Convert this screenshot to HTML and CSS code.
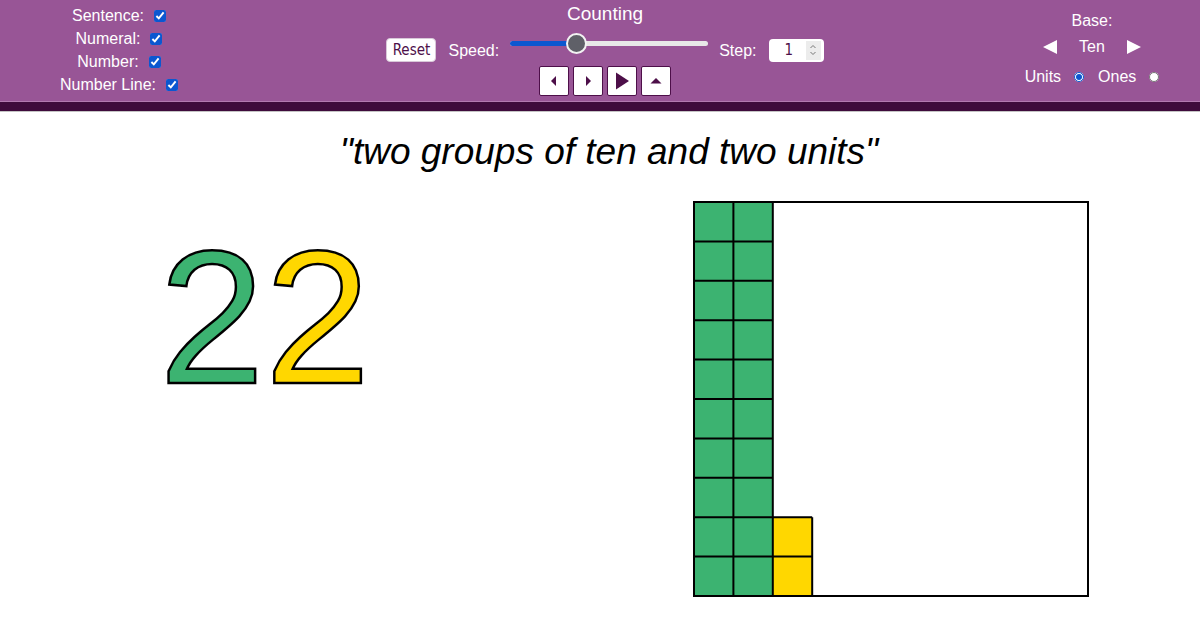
FILE: index.html
```html
<!DOCTYPE html>
<html lang="en">
<head>
<meta charset="utf-8">
<title>Counting</title>
<link rel="stylesheet" href="styles.css">
</head>
<body>
<header class="toolbar">
  <div class="opts">
    <label class="opt">Sentence: <input type="checkbox" checked></label>
    <label class="opt">Numeral: <input type="checkbox" checked></label>
    <label class="opt">Number: <input type="checkbox" checked></label>
    <label class="opt">Number Line: <input type="checkbox" checked></label>
  </div>
  <div class="center">
    <div class="title">Counting</div>
    <div class="controls">
      <button class="reset">Reset</button>
      <span class="lbl">Speed:</span>
      <div class="slider">
        <div class="fill" style="width:66px"></div>
        <div class="thumb" style="left:56px"></div>
      </div>
      <span class="lbl">Step:</span>
      <div class="stepbox">
        <span class="val">1</span>
        <span class="spin">
          <svg width="10" height="16" viewBox="0 0 10 16"><path d="M2.5 6 5 3.5 7.5 6M2.5 10 5 12.5 7.5 10" fill="none" stroke="#777" stroke-width="1"/></svg>
        </span>
      </div>
    </div>
    <div class="playbtns">
      <button class="pb"><svg width="10" height="12" viewBox="0 0 10 12"><path d="M7 1 2 6 7 11Z" fill="#4d0f49"/></svg></button>
      <button class="pb"><svg width="10" height="12" viewBox="0 0 10 12"><path d="M3 1 8 6 3 11Z" fill="#4d0f49"/></svg></button>
      <button class="pb"><svg width="16" height="18" viewBox="0 0 16 18"><path d="M2 0.5 15 9 2 17.5Z" fill="#4d0f49"/></svg></button>
      <button class="pb"><svg width="14" height="10" viewBox="0 0 14 10"><path d="M1.5 7.5 7 2 12.5 7.5Z" fill="#4d0f49"/></svg></button>
    </div>
  </div>
  <div class="base">
    <div class="base-title">Base:</div>
    <div class="base-row">
      <svg width="16" height="16" viewBox="0 0 16 16"><path d="M15 1V15L1 8Z" fill="#fff"/></svg>
      <span>Ten</span>
      <svg width="16" height="16" viewBox="0 0 16 16"><path d="M1 1V15L15 8Z" fill="#fff"/></svg>
    </div>
    <div class="radio-row">
      <label class="radio">Units <input type="radio" name="unit" checked></label>
      <label class="radio">Ones <input type="radio" name="unit"></label>
    </div>
  </div>
</header>
<div class="band"></div>
<main>
  <p class="sentence">"two groups of ten and two units"</p>
  <div class="stage">
    <div class="numeral"><span class="tens">2</span><span class="ones">2</span></div>
    <svg class="blocks" width="398" height="398" viewBox="0 0 398 398">
      <rect x="2" y="2" width="394" height="394" fill="#fff"/>
      <rect x="2" y="2" width="78.8" height="394" fill="#3cb371"/>
      <rect x="80.8" y="317.2" width="39.4" height="78.8" fill="#ffd700"/>
      <path d="M2 41.4H80.8M2 80.8H80.8M2 120.2H80.8M2 159.6H80.8M2 199H80.8M2 238.4H80.8M2 277.8H80.8M2 317.2H120.2M2 356.6H120.2M41.4 2V396M80.8 2V396M120.2 317.2V396" fill="none" stroke="#000" stroke-width="2"/>
      <rect x="2" y="2" width="394" height="394" fill="none" stroke="#000" stroke-width="2"/>
    </svg>
  </div>
</main>
</body>
</html>
```

FILE: styles.css
```css
html, body {
  margin: 0;
  padding: 0;
  background: #fff;
  font-family: "Liberation Sans", Arial, sans-serif;
}

.toolbar {
  display: grid;
  grid-template-columns: 238px 734px 1fr;
  height: 101px;
  background: #985596;
  border-bottom: 1px solid #b27ab0;
  color: #fff;
  font-size: 16px;
}

.opts {
  display: flex;
  flex-direction: column;
  align-items: center;
  padding-top: 4px;
}

.opt {
  display: flex;
  align-items: center;
  gap: 10px;
  height: 23px;
  line-height: 23px;
}

.opt input {
  margin: 0;
  width: 12px;
  height: 12px;
  accent-color: #0b57d0;
}

.center {
  display: flex;
  flex-direction: column;
  align-items: center;
}

.title {
  font-size: 19px;
  line-height: 22px;
  padding-top: 3px;
}

.controls {
  display: flex;
  align-items: center;
  gap: 12px;
  height: 24px;
  margin-top: 13px;
}

.reset {
  width: 50px;
  height: 24px;
  padding: 0;
  border: 1px solid #d8c8d8;
  border-radius: 4px;
  background: #fff;
  color: #4d0f49;
  font-family: "DejaVu Sans Condensed", "DejaVu Sans", sans-serif;
  font-size: 15px;
}

.lbl {
  font-size: 16px;
  line-height: 24px;
  position: relative;
  top: 1px;
}

.slider {
  position: relative;
  width: 198px;
  height: 5px;
  border-radius: 3px;
  background: #e8e8e8;
  margin: 0 -1px;
  top: -7px;
}

.fill {
  height: 5px;
  border-radius: 3px 0 0 3px;
  background: #0b57d0;
}

.thumb {
  position: absolute;
  top: -8px;
  width: 17px;
  height: 17px;
  border-radius: 50%;
  background: #5f6068;
  border: 2px solid #f2f2f2;
}

.stepbox {
  display: flex;
  align-items: center;
  justify-content: space-between;
  width: 55px;
  height: 23px;
  box-sizing: border-box;
  padding: 0 3px 0 16px;
  background: #fff;
  border-radius: 4px;
  color: #4d0f49;
  font-family: "DejaVu Sans Condensed", "DejaVu Sans", sans-serif;
  font-size: 15px;
}

.spin {
  display: flex;
  align-items: center;
  justify-content: center;
  width: 15px;
  height: 19px;
  background: #ececec;
}

.spin svg {
  display: block;
}

.playbtns {
  display: flex;
  gap: 4px;
  margin-top: 4px;
}

.pb {
  display: flex;
  align-items: center;
  justify-content: center;
  width: 30px;
  height: 30px;
  padding: 0;
  background: #fff;
  border: 1px solid #4d0f49;
  border-radius: 2px;
}

.pb svg {
  display: block;
}

.base {
  display: flex;
  flex-direction: column;
  align-items: center;
  padding-left: 12px;
}

.base-title {
  line-height: 22px;
  margin-top: 10px;
}

.base-row {
  display: flex;
  align-items: center;
  gap: 21px;
  height: 22px;
  margin-top: 4px;
}

.base-row svg {
  display: block;
}

.radio-row {
  display: flex;
  align-items: center;
  gap: 14px;
  height: 22px;
  margin-top: 8px;
}

.radio {
  display: flex;
  align-items: center;
  gap: 13px;
}

.radio input {
  margin: 0;
  width: 10px;
  height: 10px;
  accent-color: #0b57d0;
}

.band {
  height: 9px;
  background: #3e0b3b;
  border-bottom: 1px solid #c4c4c4;
}

main {
  display: block;
}

.sentence {
  margin: 0;
  padding-top: 18px;
  padding-left: 18px;
  font-size: 37px;
  line-height: 43px;
  font-style: italic;
  text-align: center;
  color: #000;
}

.stage {
  display: flex;
  align-items: flex-start;
  padding-top: 27px;
}

.numeral {
  margin-left: 159px;
  margin-top: 22px;
  font-size: 190px;
  line-height: 190px;
  -webkit-text-stroke: 2.5px #000;
}

.tens {
  color: #3cb371;
}

.ones {
  color: #ffd700;
}

.blocks {
  display: block;
  margin-left: auto;
  margin-right: 110px;
}
```
